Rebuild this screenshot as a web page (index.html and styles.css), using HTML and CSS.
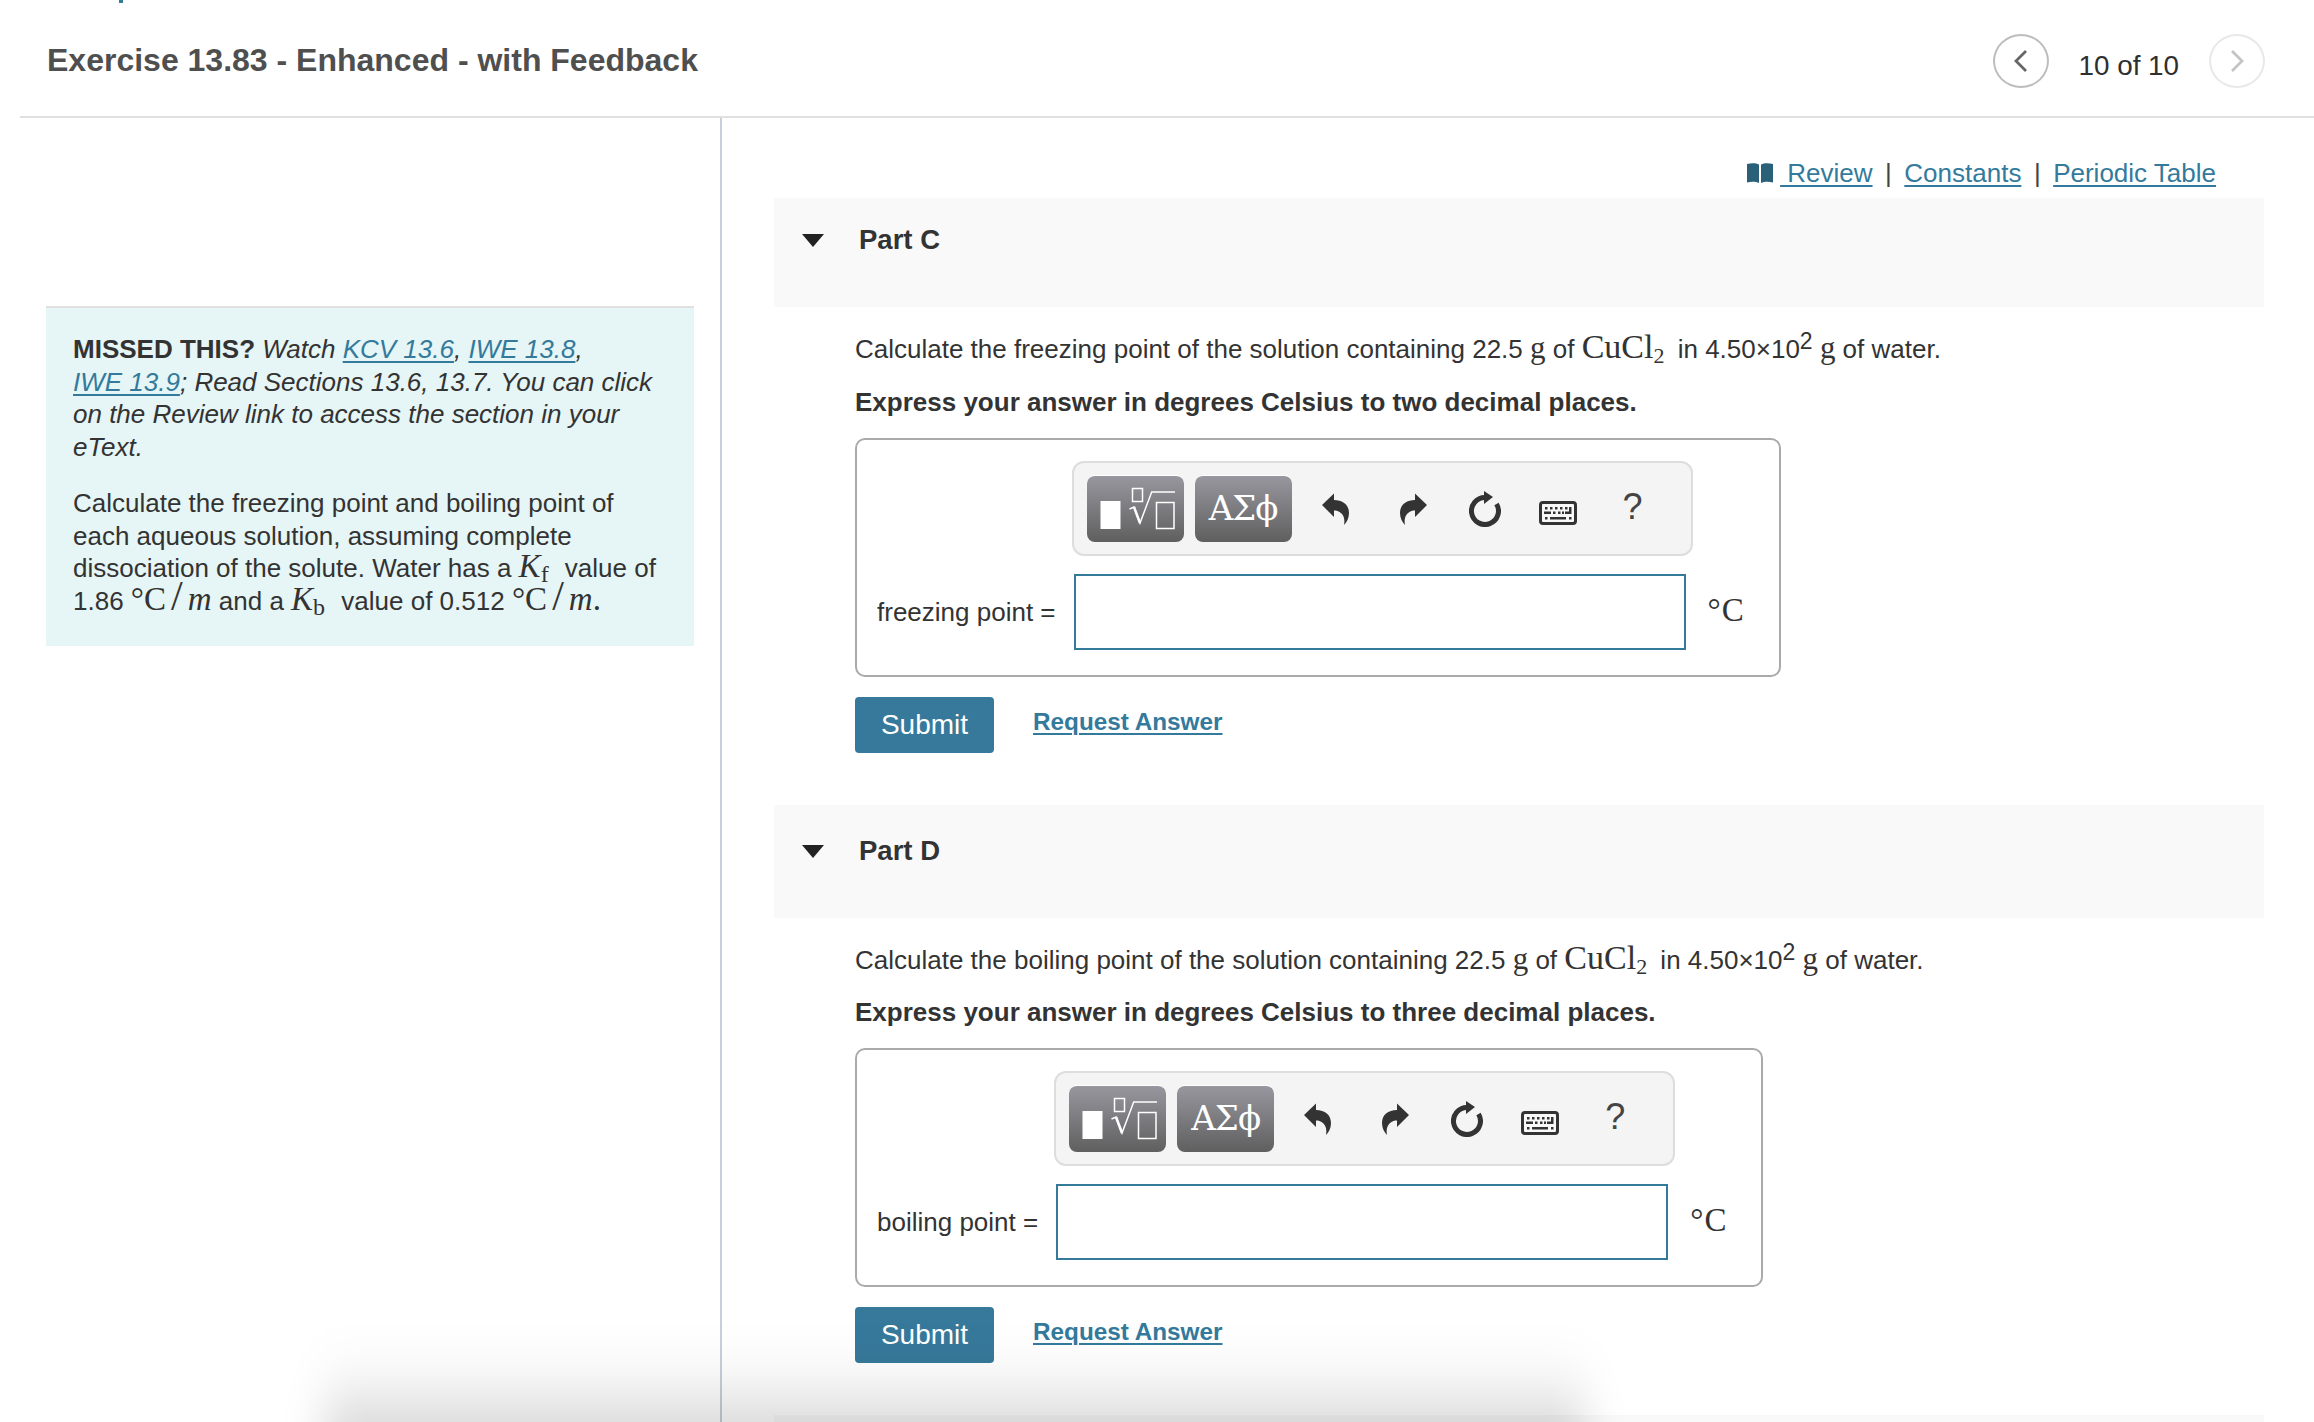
FILE: index.html
```html
<!DOCTYPE html>
<html lang="en">
<head>
<meta charset="utf-8">
<title>Exercise 13.83 - Enhanced - with Feedback</title>
<link rel="stylesheet" href="styles.css">
</head>
<body>
<svg class="defs" width="0" height="0" aria-hidden="true">
  <symbol id="i-undo" viewBox="0 0 27 32"><path d="M0 12 L12 .5 V7 C21 7 27 12 27 20 C27 25 25 29 22 32 C23 27 22 23 19.5 20.5 C17 18 14 17.5 12 17.5 V24 Z"/></symbol>
  <symbol id="i-redo" viewBox="0 0 27 32"><path d="M27 12 L15 .5 V7 C6 7 0 12 0 20 C0 25 2 29 5 32 C4 27 5 23 7.5 20.5 C10 18 13 17.5 15 17.5 V24 Z"/></symbol>
  <symbol id="i-reload" viewBox="0 0 32 36"><path d="M16 6.5 A13.5 13.5 0 1 0 27.5 13" fill="none" stroke="currentColor" stroke-width="5"/><path d="M15 0 L24 6 L15 13 Z"/></symbol>
  <symbol id="i-kbd" viewBox="0 0 38 24"><rect x="1.5" y="1.5" width="35" height="21" rx="2.5" fill="#f8f8f8" stroke="currentColor" stroke-width="3"/><path d="M6 6h2.500v2.500H6zM11 6h2.500v2.500H11zM16 6h2.500v2.500H16zM21 6h2.500v2.500H21zM26 6h2.500v2.500H26zM30 6h2.500v7H26v-2.500h4zM5 10.500h7v2.500H5zM14 10.500h2.500v2.500H14zM19 10.500h2.500v2.500H19zM23 10.500h2v2.500h-2zM6 16h2.500v2.500H6zM11 16h16v2.500H11zM30 16h2.500v2.500H30z"/></symbol>
  <symbol id="i-tmpl" viewBox="0 0 97 67"><rect x="13.5" y="25" width="20" height="28" fill="#fff"/><path d="M45.5 12.500h10v13h-10zM69.500 26.500h17.500v26h-17.500z" fill="none" stroke="#fff" stroke-width="1.500"/><path d="M42.500 33 L47 31 L53 47 L64.700 16 H88" fill="none" stroke="#fff" stroke-width="1.500"/><path d="M47 31 L53 47" fill="none" stroke="#fff" stroke-width="2.500"/></symbol>
</svg>

<span class="stub"></span>

<header class="topbar">
  <h1 class="title">Exercise 13.83 - Enhanced - with Feedback</h1>
  <nav class="pager">
    <button class="circle" type="button" aria-label="Previous"><svg viewBox="0 0 16 24" width="16" height="24"><path d="M13 2 L3 12 L13 22" fill="none" stroke="#666" stroke-width="2.800"/></svg></button>
    <span class="count">10 of 10</span>
    <button class="circle off" type="button" aria-label="Next"><svg viewBox="0 0 16 24" width="16" height="24"><path d="M3 2 L13 12 L3 22" fill="none" stroke="#c4c4c4" stroke-width="2.800"/></svg></button>
  </nav>
</header>

<main class="layout">
  <aside class="side">
    <div class="note">
      <p class="it"><b>MISSED THIS?</b> Watch <a href="#">KCV 13.6</a>, <a href="#">IWE 13.8</a>, <a href="#">IWE 13.9</a>; Read Sections 13.6, 13.7. You can click on the Review link to access the section in your eText.</p>
      <p>Calculate the freezing point and boiling point of each aqueous solution, assuming complete dissociation of the solute. Water has a <span class="m kv"><i>K</i><sub>f</sub></span> value of 1.86 <span class="m">°C<span class="sl">/</span><i>m</i></span> and a <span class="m kv"><i>K</i><sub>b</sub></span> value of 0.512 <span class="m">°C<span class="sl">/</span><i>m</i>.</span></p>
    </div>
  </aside>

  <section class="work">
    <div class="links">
      <svg class="book" viewBox="0 0 26 20" width="26" height="20"><path d="M0 1 C4 0 9 0 12 1.5 V20 C9 18.5 4 18.5 0 19.5 Z M26 1 C22 0 17 0 14 1.5 V20 C17 18.5 22 18.5 26 19.5 Z" fill="#2a6078"/></svg>
      <a href="#">&nbsp;Review</a><span class="sep">|</span><a href="#">Constants</a><span class="sep">|</span><a href="#">Periodic Table</a>
    </div>

    <article class="part">
      <div class="part-head first"><span class="tri"></span><h2>Part C</h2></div>
      <div class="part-body">
        <p class="q">Calculate the freezing point of the solution containing 22.5 <span class="m gram">g</span> of <span class="m big">CuCl<sub>2</sub></span> in 4.50×10<sup class="pow">2</sup> <span class="m gram">g</span> of water.</p>
        <p class="ask">Express your answer in degrees Celsius to two decimal places.</p>
        <div class="answer">
          <div class="tools">
            <button class="tbtn" type="button" aria-label="Templates"><svg width="97" height="67"><use href="#i-tmpl"/></svg></button>
            <button class="tbtn sym" type="button">ΑΣϕ</button>
            <svg class="ic undo" width="27" height="32"><use href="#i-undo"/></svg>
            <svg class="ic redo" width="27" height="32"><use href="#i-redo"/></svg>
            <svg class="ic reload" width="32" height="36"><use href="#i-reload"/></svg>
            <svg class="ic kbd" width="38" height="24"><use href="#i-kbd"/></svg>
            <span class="help">?</span>
          </div>
          <label class="lbl" for="fp">freezing point =</label>
          <input class="field" id="fp" type="text">
          <span class="unit m">°C</span>
        </div>
        <div class="actions">
          <button class="submit" type="button">Submit</button>
          <a class="req" href="#">Request Answer</a>
        </div>
      </div>
    </article>

    <article class="part">
      <div class="part-head"><span class="tri"></span><h2>Part D</h2></div>
      <div class="part-body">
        <p class="q">Calculate the boiling point of the solution containing 22.5 <span class="m gram">g</span> of <span class="m big">CuCl<sub>2</sub></span> in 4.50×10<sup class="pow">2</sup> <span class="m gram">g</span> of water.</p>
        <p class="ask">Express your answer in degrees Celsius to three decimal places.</p>
        <div class="answer">
          <div class="tools">
            <button class="tbtn" type="button" aria-label="Templates"><svg width="97" height="67"><use href="#i-tmpl"/></svg></button>
            <button class="tbtn sym" type="button">ΑΣϕ</button>
            <svg class="ic undo" width="27" height="32"><use href="#i-undo"/></svg>
            <svg class="ic redo" width="27" height="32"><use href="#i-redo"/></svg>
            <svg class="ic reload" width="32" height="36"><use href="#i-reload"/></svg>
            <svg class="ic kbd" width="38" height="24"><use href="#i-kbd"/></svg>
            <span class="help">?</span>
          </div>
          <label class="lbl" for="bp">boiling point =</label>
          <input class="field" id="bp" type="text">
          <span class="unit m">°C</span>
        </div>
        <div class="actions">
          <button class="submit" type="button">Submit</button>
          <a class="req" href="#">Request Answer</a>
        </div>
      </div>
    </article>

    <div class="part-head next"></div>
  </section>
</main>
<div class="shade"><div class="shade-fill"></div></div>
</body>
</html>
```
FILE: styles.css
```css
* { box-sizing: border-box; }
html, body { margin: 0; height: 1422px; overflow: hidden; }
body { position: relative; background: #fff; color: #333; font: 26px/32.4px "Liberation Sans", Arial, sans-serif; }
p, h1, h2 { margin: 0; }
a { color: #337a9c; text-decoration: underline; text-underline-offset: 3px; text-decoration-thickness: 2px; }
.defs { position: absolute; }
.stub { position: absolute; left: 119px; top: 0; width: 4px; height: 3px; background: #337a9c; }

.topbar { height: 118px; margin-left: 20px; padding: 0 49px 0 27px; border-bottom: 2px solid #e0e0e0; display: flex; align-items: center; justify-content: space-between; }
.title { font-size: 32px; font-weight: 700; color: #4f4f4f; line-height: 36px; margin-top: 3px; }
.pager { display: flex; align-items: center; margin-top: 6px; }
.circle { width: 56px; height: 54px; padding: 0; border: 2px solid #bdbdbd; border-radius: 50%; background: #fff; display: flex; align-items: center; justify-content: center; }
.circle.off { border-color: #e8e8e8; }
.count { margin: 10px 30px 0 30px; color: #2f2f2f; font-size: 27.8px; }

.layout { display: grid; grid-template-columns: 722px 1fr; height: 1304px; }
.side { border-right: 2px solid #c5d0dc; padding: 188px 26px 0 46px; }
.note { border-top: 2px solid #e0e0e0; background: #e6f5f5; height: 340px; padding: 25px 30px 0 27px; line-height: 32.7px; }
.note p + p { margin-top: 23px; }
.note a { white-space: nowrap; }
.it { font-style: italic; }
.it b { font-style: normal; }

.m { font-family: "Liberation Serif", "Times New Roman", serif; line-height: 0; font-size: 33px; }
.m sub { font-size: 22px; line-height: 0; vertical-align: -5px; }
.kv { margin-right: 9px; }
.kv sub { font-size: 24px; }
.sl { font-size: 42px; margin: 0 5px 0 5px; }
.gram { font-size: 31px; }
.big { font-size: 34px; margin-right: 6px; }
.pow { font-size: 23px; line-height: 0; vertical-align: 9px; }

.work { padding: 0 50px 0 52px; display: flex; flex-direction: column; }
.links { height: 80px; padding: 39px 48px 0 0; display: flex; justify-content: flex-end; align-items: flex-start; line-height: 32px; }
.book { margin: 6px 7px 0 1px; }
.sep { margin: 0 12.5px; color: #444; }

.part-head { height: 113px; background: #f9f9f9; display: flex; align-items: center; padding: 0 0 20px 28px; }
.part-head.first { height: 109px; padding-bottom: 24px; }
.part-head.next { height: 9px; padding: 0; }
.tri { width: 0; height: 0; border-left: 11px solid transparent; border-right: 11px solid transparent; border-top: 13px solid #222; margin-right: 35px; }
.part-head h2 { font-size: 27.5px; font-weight: 700; color: #333; }

.part-body { padding: 24px 0 52px 81px; }
.q { height: 36px; line-height: 36px; white-space: nowrap; }
.ask { font-weight: 700; margin-top: 19px; line-height: 32px; }
.part + .part .ask { margin-top: 18px; }

.answer { display: grid; grid-template-columns: auto 612px auto; width: max-content; margin-top: 20px; padding: 21px 34px 25px 20px; border: 2px solid #aaa; border-radius: 10px; align-items: center; }
.tools { grid-column: 2; width: 621px; height: 95px; margin-left: -2px; margin-bottom: 18px; display: flex; align-items: center; background: #f4f4f4; border: 2px solid #ddd; border-radius: 12px; padding-left: 13px; }
.tbtn { width: 97px; height: 67px; padding: 0; border: 0; border-top: 1px solid #fff; border-radius: 8px; background: linear-gradient(#98979f, #5f5f5f); color: #fff; display: block; }
.tbtn svg { display: block; }
.sym { margin-left: 11px; padding-bottom: 3px; font: 34px/1 "DejaVu Serif", serif; letter-spacing: -1px; }
.ic { fill: #333; color: #333; flex: none; }
.undo { margin-left: 30px; }
.redo { margin-left: 51px; }
.reload { margin-left: 42px; }
.kbd { margin: 8px 0 0 38px; }
.help { margin: -4px 0 0 46px; font-size: 36px; color: #444; line-height: 1; }

.lbl { grid-column: 1; grid-row: 2; margin-right: 18px; white-space: nowrap; }
.field { grid-column: 2; grid-row: 2; width: 612px; height: 76px; border: 2px solid #35799b; background: #fff; outline: 0; }
.unit { grid-column: 3; grid-row: 2; margin-left: 22px; line-height: 1; padding-bottom: 4px; letter-spacing: 1px; }

.actions { display: flex; align-items: center; margin-top: 20px; }
.submit { width: 139px; height: 56px; padding: 0; border: 0; border-radius: 4px; background: #37799b; color: #fff; font: 28px/56px "Liberation Sans", Arial, sans-serif; }
.req { margin: -6px 0 0 39px; font-size: 24.3px; font-weight: 700; }

.shade { position: absolute; left: 0; right: 0; bottom: 0; height: 100px; overflow: hidden; pointer-events: none; }
.shade-fill { position: absolute; left: 325px; width: 1260px; top: 10px; height: 130px; background: linear-gradient(rgba(0,0,0,0) 5%, rgba(0,0,0,.03) 35%, rgba(0,0,0,.13) 68%, rgba(0,0,0,.18) 100%); filter: blur(20px); }
```
